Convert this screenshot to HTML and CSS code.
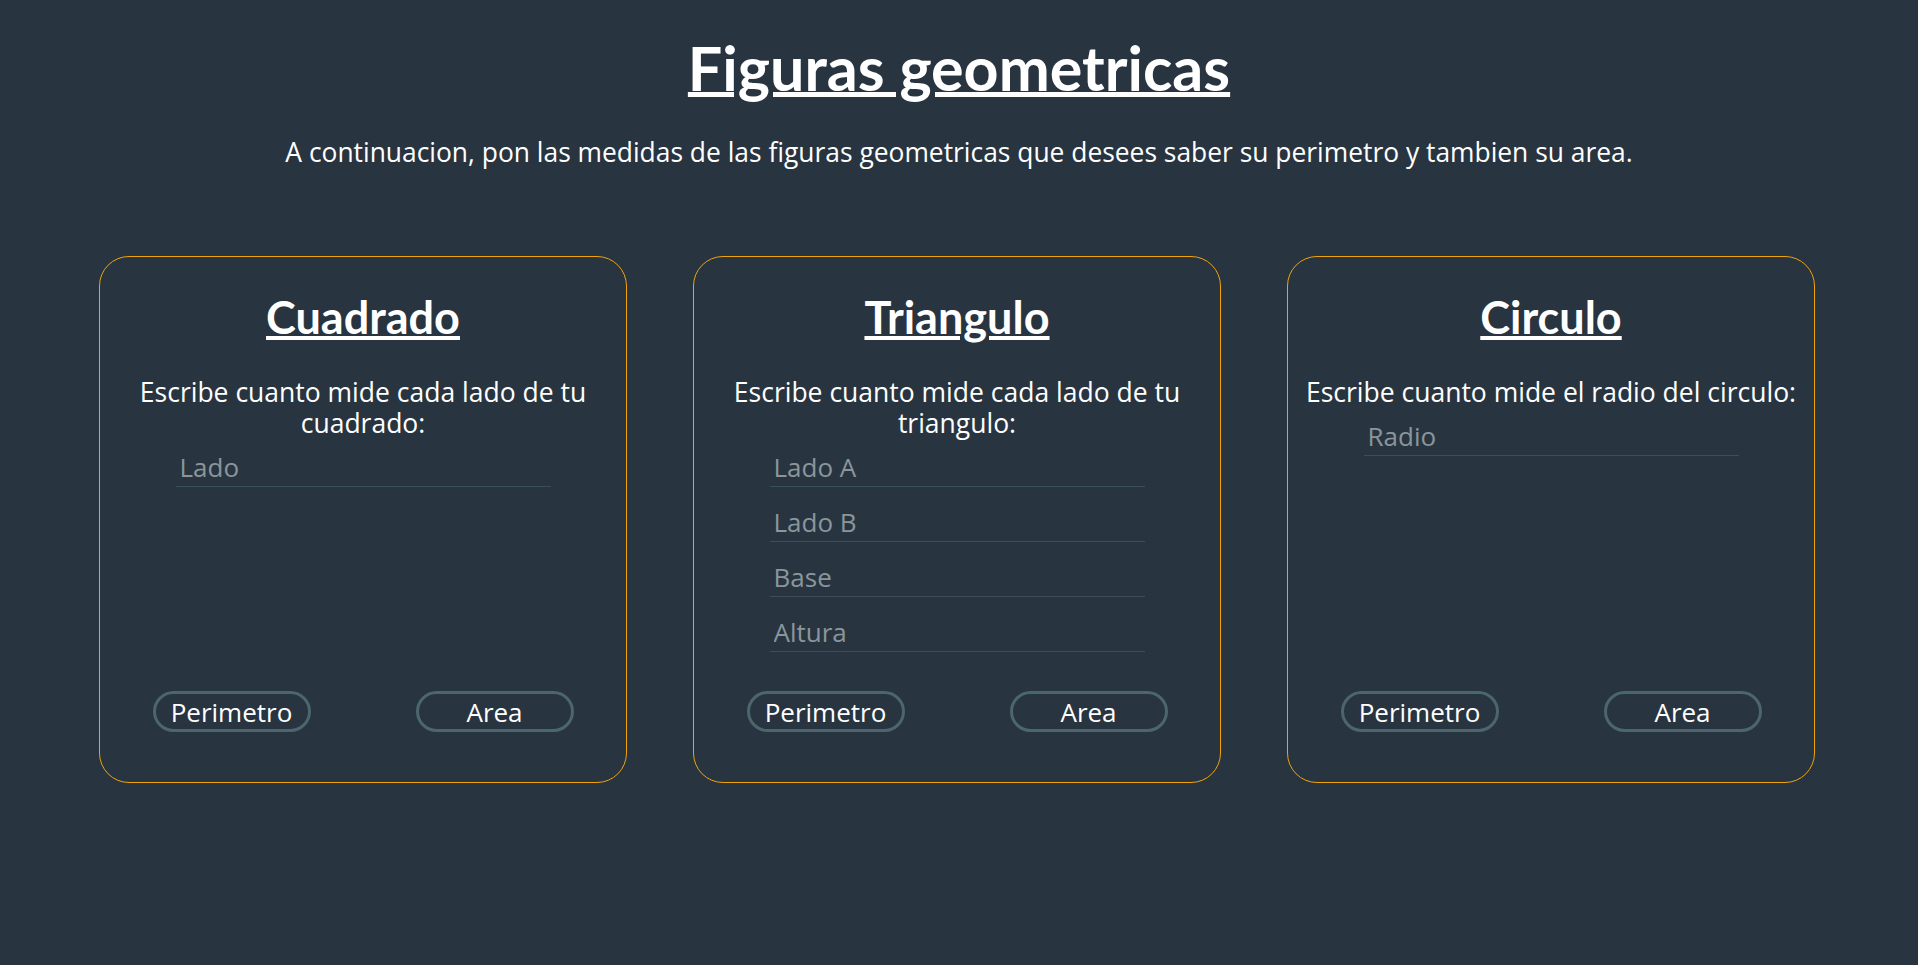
FILE: index.html
```html
<!DOCTYPE html>
<html lang="es">
<head>
<meta charset="utf-8">
<title>Figuras geometricas</title>
<link rel="stylesheet" href="styles.css">
</head>
<body>
<header class="intro">
  <h1 class="intro-title">Figuras geometricas</h1>
  <p class="intro-text">A continuacion, pon las medidas de las figuras geometricas que desees saber su perimetro y tambien su area.</p>
</header>
<main class="cards">
  <section class="card">
    <h2 class="card-title">Cuadrado</h2>
    <p class="card-text">Escribe cuanto mide cada lado de tu cuadrado:</p>
    <input class="field" type="number" placeholder="Lado">
    <div class="actions">
      <button class="btn" type="button">Perimetro</button>
      <button class="btn" type="button">Area</button>
    </div>
  </section>
  <section class="card">
    <h2 class="card-title">Triangulo</h2>
    <p class="card-text">Escribe cuanto mide cada lado de tu triangulo:</p>
    <input class="field" type="number" placeholder="Lado A">
    <input class="field" type="number" placeholder="Lado B">
    <input class="field" type="number" placeholder="Base">
    <input class="field" type="number" placeholder="Altura">
    <div class="actions">
      <button class="btn" type="button">Perimetro</button>
      <button class="btn" type="button">Area</button>
    </div>
  </section>
  <section class="card">
    <h2 class="card-title">Circulo</h2>
    <p class="card-text">Escribe cuanto mide el radio del circulo:</p>
    <input class="field" type="number" placeholder="Radio">
    <div class="actions">
      <button class="btn" type="button">Perimetro</button>
      <button class="btn" type="button">Area</button>
    </div>
  </section>
</main>
</body>
</html>
```
FILE: styles.css
```css
html, body {
  margin: 0;
  padding: 0;
}

body {
  background: #283541;
  color: #ffffff;
  font-family: "Open Sans", "Noto Sans", sans-serif;
}

.intro {
  text-align: center;
  padding-top: 31px;
}

.intro-title {
  margin: 0;
  font-family: Lato, "Open Sans", sans-serif;
  font-size: 61px;
  line-height: 74px;
  font-weight: 700;
  text-decoration: underline;
  text-decoration-thickness: 5px;
  text-underline-offset: 1px;
}

.intro-text {
  margin: 31px 0 0;
  font-size: 26.4px;
  line-height: 32px;
}

.cards {
  display: flex;
  gap: 66px;
  padding-left: 99px;
  margin-top: 88px;
}

.card {
  box-sizing: border-box;
  width: 528px;
  height: 527px;
  border: 1px solid #f0a30a;
  border-radius: 30px;
  padding: 34px 0 50px;
  display: flex;
  flex-direction: column;
  align-items: center;
  text-align: center;
}

.card-title {
  margin: 0;
  font-family: Lato, "Open Sans", sans-serif;
  font-size: 45px;
  line-height: 52px;
  font-weight: 700;
  text-decoration: underline;
  text-decoration-thickness: 4px;
  text-underline-offset: 2px;
}

.card-text {
  margin: 34px 8px 8px;
  font-size: 26.5px;
  line-height: 31px;
}

.field {
  box-sizing: border-box;
  width: 375px;
  height: 40px;
  margin: 0 0 15px;
  padding: 0 4px;
  background: transparent;
  border: none;
  border-bottom: 1px solid #3b4f58;
  color: #ffffff;
  font-family: inherit;
  font-size: 26px;
  outline: none;
  -moz-appearance: textfield;
}

.field::-webkit-outer-spin-button,
.field::-webkit-inner-spin-button {
  -webkit-appearance: none;
  margin: 0;
}

.field::placeholder {
  color: #8a959c;
}

.actions {
  margin-top: auto;
  align-self: stretch;
  display: flex;
  justify-content: space-around;
}

.btn {
  box-sizing: border-box;
  width: 158px;
  height: 41px;
  padding: 0;
  background: transparent;
  border: 3px solid #4d656c;
  border-radius: 21px;
  color: #ffffff;
  font-family: inherit;
  font-size: 26px;
  line-height: 1;
  cursor: pointer;
}
```
